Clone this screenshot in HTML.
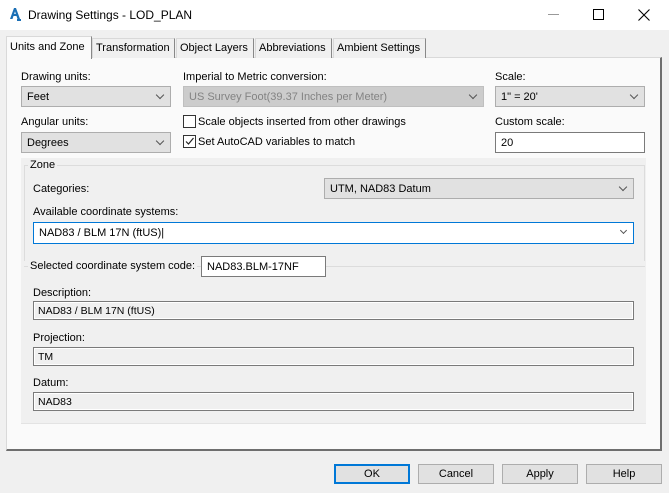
<!DOCTYPE html>
<html><head><style>
*{box-sizing:border-box;margin:0;padding:0}
body{width:669px;height:493px;background:#f0f0f0;font-family:"Liberation Sans",sans-serif;font-size:11px;color:#000;position:relative;overflow:hidden}
.a{position:absolute;white-space:nowrap}
.sel{position:absolute;white-space:nowrap;background:#e1e1e1;border:1px solid #adadad;height:21px;padding:4px 0 0 5px}
.sel::after{content:"";position:absolute;right:7px;top:5px;width:5px;height:5px;border-right:1px solid #555;border-bottom:1px solid #555;transform:rotate(45deg)}
.inp{position:absolute;white-space:nowrap;background:#fff;border:1px solid #7a7a7a;height:21px;padding:4px 0 0 5px}
.ro{position:absolute;white-space:nowrap;background:#f0f0f0;border:1px solid #7a7a7a;box-shadow:inset 0 0 0 1px #fff;height:19px;padding:3px 0 0 4px;font-size:10.5px}
.tab{position:absolute;white-space:nowrap;overflow:hidden;top:38px;height:20px;border:1px solid #d9d9d9;border-bottom:none;border-right:1px solid #888;background:#f0f0f0;padding:3px 0 0 3px}
.btn{position:absolute;top:464px;height:20px;width:76px;background:#e1e1e1;border:1px solid #adadad;text-align:center;padding-top:3px}
</style></head><body>
<div class="a" style="left:0;top:0;width:669px;height:30px;background:#fff"></div>
<svg class="a" style="left:9px;top:7px" width="12" height="14"><path d="M1 12 L5 1 H7 L11 12 H8.5 L7.5 9 H4.5 L3.5 12Z M5.2 7 H6.8 L6 4.3Z" fill="#1b6fb5" fill-rule="evenodd"/><rect x="8" y="12" width="4" height="2" fill="#1b6fb5"/></svg>
<div class="a" style="left:28px;top:8px;font-size:12px">Drawing Settings - LOD_PLAN</div>
<div class="a" style="left:548px;top:14px;width:11px;height:1px;background:#999"></div>
<div class="a" style="left:593px;top:9px;width:11px;height:11px;border:1px solid #000"></div>
<svg class="a" style="left:638px;top:9px" width="12" height="12"><path d="M0.5 0.5 L11.5 11.5 M11.5 0.5 L0.5 11.5" stroke="#000" stroke-width="1.1"/></svg>

<div class="a" style="left:6px;top:57px;width:656px;height:394px;background:#fafafa;border-top:1px solid #d9d9d9;border-left:1px solid #d9d9d9;border-right:2px solid #6e6e6e;border-bottom:2px solid #6e6e6e"></div>
<div class="tab" style="left:6px;top:36px;height:23px;width:86px;background:#fafafa;border-bottom:none;z-index:2;padding-top:4px">Units and Zone</div>
<div class="tab" style="left:92px;width:83px">Transformation</div>
<div class="tab" style="left:176px;width:78px">Object Layers</div>
<div class="tab" style="left:255px;width:77px">Abbreviations</div>
<div class="tab" style="left:333px;width:93px">Ambient Settings</div>

<div class="a" style="left:21px;top:71px">Drawing units:</div>
<div class="sel" style="left:21px;top:86px;width:150px">Feet</div>
<div class="a" style="left:183px;top:71px">Imperial to Metric conversion:</div>
<div class="sel" style="left:183px;top:86px;width:301px;background:#cccccc;border-color:#bfbfbf;color:#838383">US Survey Foot(39.37 Inches per Meter)</div>
<div class="a" style="left:495px;top:71px">Scale:</div>
<div class="sel" style="left:495px;top:86px;width:150px">1" = 20'</div>

<div class="a" style="left:21px;top:116px">Angular units:</div>
<div class="sel" style="left:21px;top:132px;width:150px">Degrees</div>
<div class="a" style="left:183px;top:115px;width:13px;height:13px;border:1px solid #333;background:#fff"></div>
<div class="a" style="left:198px;top:116px">Scale objects inserted from other drawings</div>
<div class="a" style="left:183px;top:135px;width:13px;height:13px;border:1px solid #333;background:#fff"></div>
<svg class="a" style="left:184px;top:136px" width="11" height="11"><path d="M2 5.5 L4.5 8 L9.5 2" stroke="#222" fill="none" stroke-width="1.2"/></svg>
<div class="a" style="left:198px;top:136px">Set AutoCAD variables to match</div>
<div class="a" style="left:495px;top:116px">Custom scale:</div>
<div class="inp" style="left:495px;top:132px;width:150px">20</div>

<div class="a" style="left:21px;top:158px;width:625px;height:266px;background:#f0f0f0;border-bottom:1px solid #e3e3e3"></div>
<div class="a" style="left:24px;top:165px;width:621px;height:96px;border:1px solid #dcdcdc;border-bottom:none"></div>
<div class="a" style="left:28px;top:159px;background:#f0f0f0;padding:0 2px">Zone</div>
<div class="a" style="left:33px;top:183px">Categories:</div>
<div class="sel" style="left:324px;top:178px;width:310px">UTM, NAD83 Datum</div>
<div class="a" style="left:33px;top:206px">Available coordinate systems:</div>
<div class="inp" style="left:33px;top:222px;width:601px;height:22px;border-color:#0078d7;padding-top:4px">NAD83 / BLM 17N (ftUS)|</div>
<div class="a" style="left:621px;top:228px;width:5px;height:5px;border-right:1px solid #555;border-bottom:1px solid #555;transform:rotate(45deg)"></div>
<div class="a" style="left:24px;top:266px;width:621px;height:1px;background:#dcdcdc"></div>
<div class="a" style="left:28px;top:260px;background:#f0f0f0;padding:0 2px 0 2px">Selected coordinate system code:</div>
<div class="inp" style="left:201px;top:256px;width:125px">NAD83.BLM-17NF</div>
<div class="a" style="left:33px;top:287px">Description:</div>
<div class="ro" style="left:33px;top:301px;width:601px">NAD83 / BLM 17N (ftUS)</div>
<div class="a" style="left:33px;top:332px">Projection:</div>
<div class="ro" style="left:33px;top:347px;width:601px">TM</div>
<div class="a" style="left:33px;top:377px">Datum:</div>
<div class="ro" style="left:33px;top:392px;width:601px">NAD83</div>

<div class="btn" style="left:334px;border:2px solid #0078d7;padding-top:2px">OK</div>
<div class="btn" style="left:418px">Cancel</div>
<div class="btn" style="left:502px">Apply</div>
<div class="btn" style="left:586px">Help</div>
</body></html>
